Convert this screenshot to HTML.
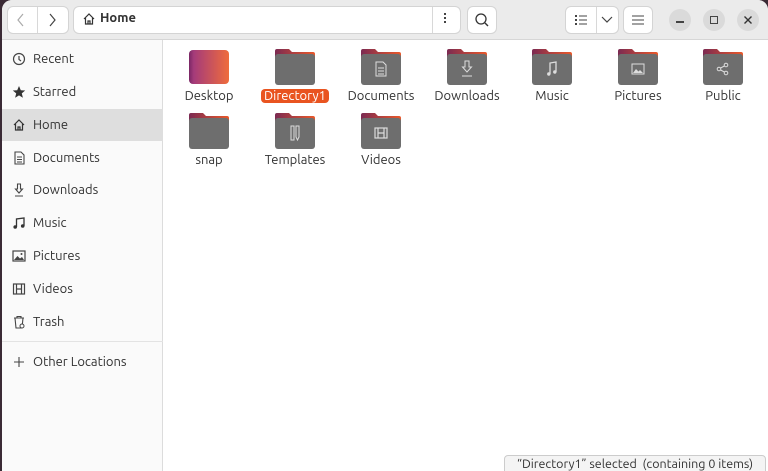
<!DOCTYPE html>
<html><head><style>
*{margin:0;padding:0;box-sizing:border-box}
body{width:768px;height:471px;overflow:hidden;background:#3a2a35;font-family:"Ubuntu","Liberation Sans",sans-serif;font-size:13px;color:#333}
.win{position:absolute;left:2px;top:0;width:766px;height:471px;background:#fff;border-radius:10px 10px 0 0;overflow:hidden}
.hdr{position:absolute;left:0;top:0;width:766px;height:40px;background:#ebebeb;border-bottom:1px solid #d6d6d6}
.btn{position:absolute;top:6px;height:28px;background:#fff;border:1px solid #d4d4d4;border-radius:6px}
.side{position:absolute;left:0;top:40px;width:161px;height:431px;background:#fafafa;border-right:1px solid #dcdcdc}
.it{position:absolute;left:0;width:161px;height:32px;display:flex;align-items:center}
.it svg{position:absolute;left:10px}
.it span{position:absolute;left:31px}
.f{position:absolute;width:86px;text-align:center}
.f .ic{position:relative;width:40px;height:36px;margin:0 auto}
.f .lb{margin-top:4px;font-size:13px;color:#333;white-space:nowrap}
.sel{background:#e95420;color:#fff!important;border-radius:4px;display:inline-block;padding:0 3px}
.status{position:absolute;left:502px;top:455px;width:262px;height:18px;background:#f4f4f4;border:1px solid #ccc;border-radius:4px 4px 0 0;font-size:12.5px;text-align:center;line-height:17px;color:#333}
</style></head><body>
<div class="win">
<div class="hdr">
 <div class="btn" style="left:5px;width:62px"></div>
 <div style="position:absolute;left:35px;top:7px;width:1px;height:26px;background:#d8d8d8"></div>
 <svg style="position:absolute;left:14px;top:13px" width="10" height="14"><path d="M7 1L2 7L7 13" fill="none" stroke="#aaa" stroke-width="1.2"/></svg>
 <svg style="position:absolute;left:45px;top:13px" width="10" height="14"><path d="M3 1L8 7L3 13" fill="none" stroke="#444" stroke-width="1.2"/></svg>
 <div class="btn" style="left:71px;width:388px"></div>
 <div style="position:absolute;left:430px;top:7px;width:1px;height:26px;background:#d8d8d8"></div>
 <svg style="position:absolute;left:80px;top:12px" width="14" height="14"><path d="M2 7L7 2L12 7M3.5 6V12H10.5V6M6 12V9H8V12" fill="none" stroke="#333" stroke-width="1.2"/></svg>
 <div style="position:absolute;left:98px;top:11px;font-weight:bold;font-size:13px;color:#333">Home</div>
 <div style="position:absolute;left:442px;top:13px;width:2px;height:2px;background:#444;box-shadow:0 4px #444,0 8px #444"></div>
 <div class="btn" style="left:465px;width:30px"></div>
 <svg style="position:absolute;left:472px;top:12px" width="16" height="16"><circle cx="7" cy="7" r="5" fill="none" stroke="#333" stroke-width="1.3"/><path d="M11 11L14 14" stroke="#333" stroke-width="1.4"/></svg>
 <div class="btn" style="left:563px;width:54px"></div>
 <div style="position:absolute;left:594px;top:7px;width:1px;height:26px;background:#d8d8d8"></div>
 <svg style="position:absolute;left:572px;top:13px" width="14" height="14"><g fill="#444"><rect x="1" y="2" width="2" height="2"/><rect x="1" y="6" width="2" height="2"/><rect x="1" y="10" width="2" height="2"/><rect x="5" y="2.5" width="8" height="1"/><rect x="5" y="6.5" width="8" height="1"/><rect x="5" y="10.5" width="8" height="1"/></g></svg>
 <svg style="position:absolute;left:599px;top:15px" width="12" height="10"><path d="M1 2L6 7L11 2" fill="none" stroke="#444" stroke-width="1.2"/></svg>
 <div class="btn" style="left:621px;width:30px"></div>
 <svg style="position:absolute;left:629px;top:13px" width="14" height="14"><g fill="#444"><rect x="1" y="2.5" width="12" height="1"/><rect x="1" y="6.5" width="12" height="1"/><rect x="1" y="10.5" width="12" height="1"/></g></svg>
 <div style="position:absolute;left:667px;top:9px;width:22px;height:22px;border-radius:50%;background:#dadada"></div>
 <div style="position:absolute;left:674px;top:21px;width:8px;height:1.5px;background:#444"></div>
 <div style="position:absolute;left:701px;top:9px;width:22px;height:22px;border-radius:50%;background:#dadada"></div>
 <div style="position:absolute;left:708px;top:16px;width:8px;height:8px;border:1.3px solid #444"></div>
 <div style="position:absolute;left:735px;top:9px;width:22px;height:22px;border-radius:50%;background:#dadada"></div>
 <svg style="position:absolute;left:741px;top:15px" width="10" height="10"><path d="M1.5 1.5L8.5 8.5M8.5 1.5L1.5 8.5" stroke="#333" stroke-width="1.4"/></svg>
</div>
<div class="side">
 <div class="it" style="top:3px"><svg width="14" height="14"><circle cx="7" cy="7" r="5.5" fill="none" stroke="#444" stroke-width="1.2"/><path d="M7 4V7.5L9 9" fill="none" stroke="#444" stroke-width="1.2"/></svg><span>Recent</span></div>
 <div class="it" style="top:36px"><svg width="14" height="14"><path d="M7 1L8.8 5.2L13.2 5.5L9.8 8.4L10.9 12.8L7 10.4L3.1 12.8L4.2 8.4L0.8 5.5L5.2 5.2Z" fill="#333"/></svg><span>Starred</span></div>
 <div class="it" style="top:69px;background:#dedede"><svg width="14" height="14"><path d="M2 7L7 2L12 7M3.5 6V12H10.5V6M6 12V9H8V12" fill="none" stroke="#333" stroke-width="1.2"/></svg><span>Home</span></div>
 <div class="it" style="top:102px"><svg width="14" height="14"><path d="M3 1H9L12 4V13H3Z M5 6H10M5 8.5H10M5 11H10" fill="none" stroke="#444" stroke-width="1.1"/></svg><span>Documents</span></div>
 <div class="it" style="top:134px"><svg width="14" height="14"><path d="M5.5 1H8.5V6H10.5L7 10L3.5 6H5.5ZM3 13H11" fill="none" stroke="#444" stroke-width="1.1"/></svg><span>Downloads</span></div>
 <div class="it" style="top:167px"><svg width="14" height="14"><path d="M4.5 11V3L12 2V10" fill="none" stroke="#333" stroke-width="1.3"/><circle cx="3.2" cy="11" r="1.8" fill="#333"/><circle cx="10.7" cy="10" r="1.8" fill="#333"/></svg><span>Music</span></div>
 <div class="it" style="top:200px"><svg width="14" height="14"><rect x="1" y="2" width="12" height="10" fill="none" stroke="#444" stroke-width="1.2"/><path d="M2 11L5.5 7L8 9.5L10 8L12 11Z" fill="#444"/><circle cx="9.5" cy="5" r="1" fill="#444"/></svg><span>Pictures</span></div>
 <div class="it" style="top:233px"><svg width="14" height="14"><rect x="1.5" y="2" width="11" height="10" fill="none" stroke="#444" stroke-width="1.2"/><path d="M4.5 2V12M9.5 2V12M4.5 7H9.5" stroke="#444" stroke-width="1.2"/></svg><span>Videos</span></div>
 <div class="it" style="top:266px"><svg width="14" height="14"><path d="M2 3H12M5 3V1.5H9V3M3 3L4 13H10L11 3" fill="none" stroke="#444" stroke-width="1.1"/><circle cx="10" cy="11" r="2" fill="#fafafa" stroke="#444"/></svg><span>Trash</span></div>
 <div style="position:absolute;left:0;top:301px;width:161px;height:1px;background:#e3e3e3"></div>
 <div class="it" style="top:306px"><svg width="14" height="14"><path d="M7 2V12M2 7H12" stroke="#444" stroke-width="1.1"/></svg><span>Other Locations</span></div>
</div>
<!-- folders -->
<svg width="0" height="0" style="position:absolute"><defs>
<linearGradient id="tab" x1="0" x2="1"><stop offset="0" stop-color="#7b2a52"/><stop offset="1" stop-color="#e9582a"/></linearGradient>
<linearGradient id="dk" x1="0" x2="1"><stop offset="0" stop-color="#7a2765"/><stop offset=".12" stop-color="#a53b7a"/><stop offset="1" stop-color="#ef6c3c"/></linearGradient>
</defs></svg>
<div class="f" style="left:164px;top:49px"><div class="ic"><svg width="40" height="36"><rect x="0" y="1" width="40" height="34" rx="4" fill="url(#dk)"/></svg></div><div class="lb">Desktop</div></div>
<div class="f" style="left:250px;top:49px"><div class="ic"><svg width="40" height="36"><path d="M2 0H14L17 3H38Q40 3 40 5V20H0V2Q0 0 2 0Z" fill="url(#tab)"/><rect x="0" y="5" width="40" height="31" rx="3" fill="#6e6e6e"/></svg></div><div class="lb"><span class="sel">Directory1</span></div></div>
<div class="f" style="left:336px;top:49px"><div class="ic"><svg width="40" height="36"><path d="M2 0H14L17 3H38Q40 3 40 5V20H0V2Q0 0 2 0Z" fill="url(#tab)"/><rect x="0" y="5" width="40" height="31" rx="3" fill="#6e6e6e"/><path d="M15 13H22L25 16V27H15Z M17 19H23M17 22H23M17 25H23" fill="none" stroke="#ddd" stroke-width="1"/></svg></div><div class="lb">Documents</div></div>
<div class="f" style="left:422px;top:49px"><div class="ic"><svg width="40" height="36"><path d="M2 0H14L17 3H38Q40 3 40 5V20H0V2Q0 0 2 0Z" fill="url(#tab)"/><rect x="0" y="5" width="40" height="31" rx="3" fill="#6e6e6e"/><path d="M18 12H22V18H24.5L20 23L15.5 18H18ZM15 27H25" fill="none" stroke="#ddd" stroke-width="1"/></svg></div><div class="lb">Downloads</div></div>
<div class="f" style="left:507px;top:49px"><div class="ic"><svg width="40" height="36"><path d="M2 0H14L17 3H38Q40 3 40 5V20H0V2Q0 0 2 0Z" fill="url(#tab)"/><rect x="0" y="5" width="40" height="31" rx="3" fill="#6e6e6e"/><path d="M18 25V14L24 13V23" fill="none" stroke="#ddd" stroke-width="1.3"/><circle cx="16.8" cy="25" r="1.7" fill="#ddd"/><circle cx="22.8" cy="23" r="1.7" fill="#ddd"/></svg></div><div class="lb">Music</div></div>
<div class="f" style="left:593px;top:49px"><div class="ic"><svg width="40" height="36"><path d="M2 0H14L17 3H38Q40 3 40 5V20H0V2Q0 0 2 0Z" fill="url(#tab)"/><rect x="0" y="5" width="40" height="31" rx="3" fill="#6e6e6e"/><rect x="14" y="15" width="12" height="10" fill="none" stroke="#ddd"/><path d="M15 24L18 20L20.5 22.5L22 21L25 24Z" fill="#ddd"/></svg></div><div class="lb">Pictures</div></div>
<div class="f" style="left:678px;top:49px"><div class="ic"><svg width="40" height="36"><path d="M2 0H14L17 3H38Q40 3 40 5V20H0V2Q0 0 2 0Z" fill="url(#tab)"/><rect x="0" y="5" width="40" height="31" rx="3" fill="#6e6e6e"/><g fill="none" stroke="#ddd"><circle cx="16" cy="20" r="1.8"/><circle cx="23" cy="16" r="1.8"/><circle cx="23" cy="24" r="1.8"/><path d="M17.6 19L21.4 17M17.6 21L21.4 23"/></g></svg></div><div class="lb">Public</div></div>
<div class="f" style="left:164px;top:113px"><div class="ic"><svg width="40" height="36"><path d="M2 0H14L17 3H38Q40 3 40 5V20H0V2Q0 0 2 0Z" fill="url(#tab)"/><rect x="0" y="5" width="40" height="31" rx="3" fill="#6e6e6e"/></svg></div><div class="lb">snap</div></div>
<div class="f" style="left:250px;top:113px"><div class="ic"><svg width="40" height="36"><path d="M2 0H14L17 3H38Q40 3 40 5V20H0V2Q0 0 2 0Z" fill="url(#tab)"/><rect x="0" y="5" width="40" height="31" rx="3" fill="#6e6e6e"/><path d="M16 13H19V27H16ZM21 13H24V24L22.5 27L21 24Z" fill="none" stroke="#ddd"/></svg></div><div class="lb">Templates</div></div>
<div class="f" style="left:336px;top:113px"><div class="ic"><svg width="40" height="36"><path d="M2 0H14L17 3H38Q40 3 40 5V20H0V2Q0 0 2 0Z" fill="url(#tab)"/><rect x="0" y="5" width="40" height="31" rx="3" fill="#6e6e6e"/><rect x="14" y="15" width="12" height="10" fill="none" stroke="#ddd" stroke-width="1.2"/><path d="M17 15V25M23 15V25M17 20H23" stroke="#ddd" stroke-width="1.2"/></svg></div><div class="lb">Videos</div></div>
<div class="status">“Directory1” selected&nbsp; (containing 0 items)</div>
</div>
</body></html>
